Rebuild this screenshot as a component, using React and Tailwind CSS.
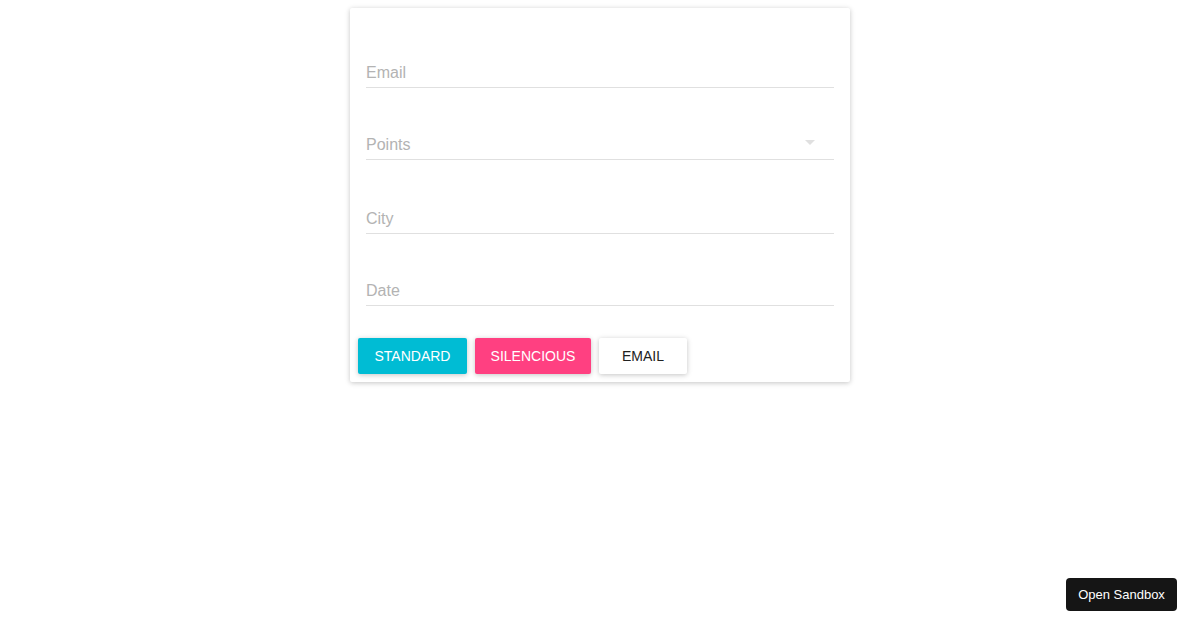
export default function App() {
  const font = { fontFamily: '"Liberation Sans", Arial, sans-serif' };
  const Field = ({ label, select, extra }) => (
    <div className={`flex flex-col justify-end ${extra ? "h-[74px] pb-[10px]" : "h-[72px] pb-2"}`}>
      <div className="relative flex items-center leading-[22px] text-[16px] text-[#b3b3b3]">
        <span>{label}</span>
        {select && (
          <svg className="absolute right-[19px] top-[6px]" width="10" height="5" viewBox="0 0 10 5">
            <path d="M0 0h10L5 5z" fill="#e0e0e0" />
          </svg>
        )}
      </div>
      <div className="mt-[3px] border-b border-[#e0e0e0]" />
    </div>
  );
  return (
    <div className="relative w-[1200px] h-[630px] bg-white" style={font}>
      <div className="flex justify-center pt-2">
        <div className="w-[500px] rounded-[2px] bg-white shadow-[0_1px_6px_rgba(0,0,0,0.12),0_1px_4px_rgba(0,0,0,0.12)] pt-4 pb-2">
          <div className="flex flex-col px-4">
            <Field label="Email" />
            <Field label="Points" select extra />
            <Field label="City" />
            <Field label="Date" />
          </div>
          <div className="mt-6 flex gap-2 px-2">
            <button className="h-9 w-[109px] rounded-[2px] bg-[#00bcd4] text-[14px] text-white uppercase shadow-[0_1px_6px_rgba(0,0,0,0.12),0_1px_4px_rgba(0,0,0,0.12)]">Standard</button>
            <button className="h-9 w-[116px] rounded-[2px] bg-[#ff4081] text-[14px] text-white uppercase shadow-[0_1px_6px_rgba(0,0,0,0.12),0_1px_4px_rgba(0,0,0,0.12)]">Silencious</button>
            <button className="h-9 w-[88px] rounded-[2px] bg-white text-[14px] text-[#212121] uppercase shadow-[0_1px_6px_rgba(0,0,0,0.12),0_1px_4px_rgba(0,0,0,0.12)]">Email</button>
          </div>
        </div>
      </div>
      <div className="absolute right-[23px] bottom-[19px] flex h-[33px] w-[111px] items-center justify-center rounded-[4px] bg-[#151515] text-[13px] text-white">
        Open Sandbox
      </div>
    </div>
  );
}
